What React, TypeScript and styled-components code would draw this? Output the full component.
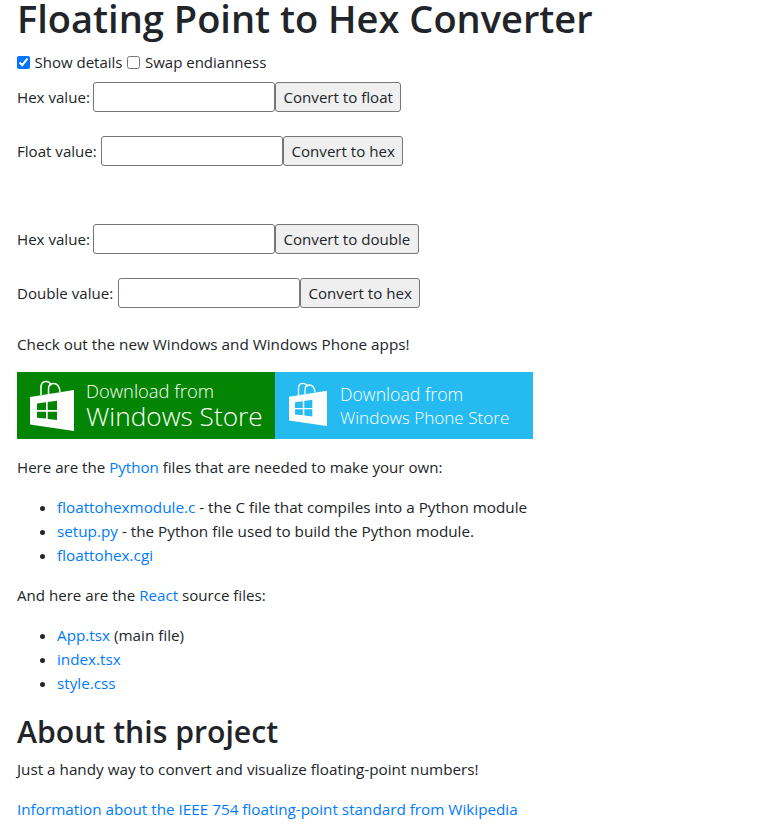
import React, { FC } from 'react';
import styled, { createGlobalStyle } from 'styled-components';

const GlobalStyle = createGlobalStyle`
  * {
    box-sizing: border-box;
  }

  body {
    margin: 0;
    background: #ffffff;
    color: #212529;
    font-family: 'Open Sans', 'Noto Sans', sans-serif;
    font-size: 15.25px;
    line-height: 24px;
  }
`;

const StoreIcon: FC<{ width: number; lift?: number }> = ({ width, lift = 0 }) => (
  <BagIcon width={width} height={(width * 51) / 44} viewBox="0 0 44 51" fill="none" $lift={lift}>
    <path d="M11 15V7.5C11 3.5 13 1.5 16 1.5S20.5 3 21 5.5" stroke="#fff" strokeWidth="1.5" />
    <path d="M18.5 14V9C18.5 5.5 20.5 3.5 23.5 3.5C27 3.5 29.5 6 30 12" stroke="#fff" strokeWidth="1.5" />
    <path
      fill="#fff"
      fillRule="evenodd"
      d="M0 17L44 10V51L0 44.5ZM7 23.5L16 22.3V30H7ZM17.7 22L27 20.7V30H17.7ZM7 31.7H16V38.6L7 37.7ZM17.7 31.7H27V40L17.7 38.9Z"
    />
  </BagIcon>
);

const App: FC = () => (
  <Page>
    <GlobalStyle />
    <Title>Floating Point to Hex Converter</Title>

    <Options>
      <input type="checkbox" defaultChecked />
      <OptionLabel>Show details</OptionLabel>
      <input type="checkbox" />
      <OptionLabel>Swap endianness</OptionLabel>
    </Options>

    <Row>
      <FieldLabel $width={76}>Hex value:</FieldLabel>
      <ValueInput />
      <ConvertButton>Convert to float</ConvertButton>
    </Row>
    <Row>
      <FieldLabel $width={84}>Float value:</FieldLabel>
      <ValueInput />
      <ConvertButton>Convert to hex</ConvertButton>
    </Row>

    <DoubleSection>
      <Row>
        <FieldLabel $width={76}>Hex value:</FieldLabel>
        <ValueInput />
        <ConvertButton>Convert to double</ConvertButton>
      </Row>
      <Row>
        <FieldLabel $width={101}>Double value:</FieldLabel>
        <ValueInput />
        <ConvertButton>Convert to hex</ConvertButton>
      </Row>
    </DoubleSection>

    <Paragraph>Check out the new Windows and Windows Phone apps!</Paragraph>

    <Badges>
      <Badge color="#038503" $inset={13}>
        <StoreIcon width={44} />
        <BadgeText $lift={4}>
          <BadgeSmall>Download from</BadgeSmall>
          <BadgeLarge>Windows Store</BadgeLarge>
        </BadgeText>
      </Badge>
      <Badge color="#25bbf0" $inset={14}>
        <StoreIcon width={38} lift={3} />
        <BadgeText $lift={0}>
          <BadgeMedium>Download from</BadgeMedium>
          <BadgePhone>Windows Phone Store</BadgePhone>
        </BadgeText>
      </Badge>
    </Badges>

    <TightParagraph>
      Here are the <Link href="#">Python</Link> files that are needed to make your own:
    </TightParagraph>
    <List>
      <li>
        <Link href="#">floattohexmodule.c</Link> - the C file that compiles into a Python module
      </li>
      <li>
        <Link href="#">setup.py</Link> - the Python file used to build the Python module.
      </li>
      <li>
        <Link href="#">floattohex.cgi</Link>
      </li>
    </List>

    <TightParagraph>
      And here are the <Link href="#">React</Link> source files:
    </TightParagraph>
    <List>
      <li>
        <Link href="#">App.tsx</Link> (main file)
      </li>
      <li>
        <Link href="#">index.tsx</Link>
      </li>
      <li>
        <Link href="#">style.css</Link>
      </li>
    </List>

    <Subtitle>About this project</Subtitle>
    <Paragraph>Just a handy way to convert and visualize floating-point numbers!</Paragraph>
    <Paragraph>
      <Link href="#">Information about the IEEE 754 floating-point standard from Wikipedia</Link>
    </Paragraph>
  </Page>
);

export default App;

const Page = styled.div`
  padding: 0 17px;
`;

const Title = styled.h1`
  margin: 0 0 13px;
  font-size: 38px;
  font-weight: 600;
  line-height: 37px;
`;

const Subtitle = styled.h2`
  margin: 18px 0 6px;
  font-size: 30.2px;
  font-weight: 600;
  line-height: 38px;
`;

const Options = styled.div`
  display: flex;
  align-items: center;
  height: 24px;
  margin-bottom: 8px;
  font-size: 15px;

  input {
    margin: 0 4.5px 0 0;
    width: 13px;
    height: 13px;
  }
`;

const OptionLabel = styled.label`
  margin-right: 5px;
`;

const Row = styled.div`
  display: flex;
  align-items: center;
  height: 30px;
  margin-bottom: 24px;
  font-size: 15.1px;
`;

const FieldLabel = styled.label<{ $width: number }>`
  width: ${({ $width }) => $width}px;
  white-space: nowrap;
`;

const DoubleSection = styled.div`
  margin-top: 58px;
`;

const ValueInput = styled.input`
  width: 182px;
  height: 30px;
  border: 1px solid #767676;
  border-radius: 3px;
  background: #ffffff;
`;

const ConvertButton = styled.button`
  height: 30px;
  padding: 0 7.5px;
  border: 1px solid #767676;
  border-radius: 3px;
  background: #efefef;
  color: #212529;
  font: inherit;
`;

const Paragraph = styled.p`
  margin: 0 0 16px;
`;

const TightParagraph = styled(Paragraph)`
  font-size: 15.1px;
`;

const Badges = styled.div`
  display: flex;
  margin-bottom: 16px;
`;

const Badge = styled.a<{ color: string; $inset: number }>`
  display: flex;
  align-items: center;
  gap: ${({ $inset }) => $inset - 1}px;
  width: 258px;
  height: 67px;
  padding-left: ${({ $inset }) => $inset}px;
  background: ${({ color }) => color};
  color: #ffffff;
`;

const BagIcon = styled.svg<{ $lift: number }>`
  flex-shrink: 0;
  margin-bottom: ${({ $lift }) => $lift}px;
`;

const BadgeText = styled.div<{ $lift: number }>`
  display: flex;
  flex-direction: column;
  margin-bottom: ${({ $lift }) => $lift}px;
  font-weight: 300;
`;

const BadgeSmall = styled.span`
  font-size: 18.4px;
  line-height: 24px;
`;

const BadgeMedium = styled.span`
  font-size: 17.7px;
  line-height: 24px;
`;

const BadgeLarge = styled.span`
  font-size: 26.2px;
  line-height: 26px;
`;

const BadgePhone = styled.span`
  font-size: 17.1px;
  line-height: 23px;
`;

const List = styled.ul`
  margin: 0 0 16px;
  padding-left: 40px;
`;

const Link = styled.a`
  color: #007bff;
  text-decoration: none;
`;
